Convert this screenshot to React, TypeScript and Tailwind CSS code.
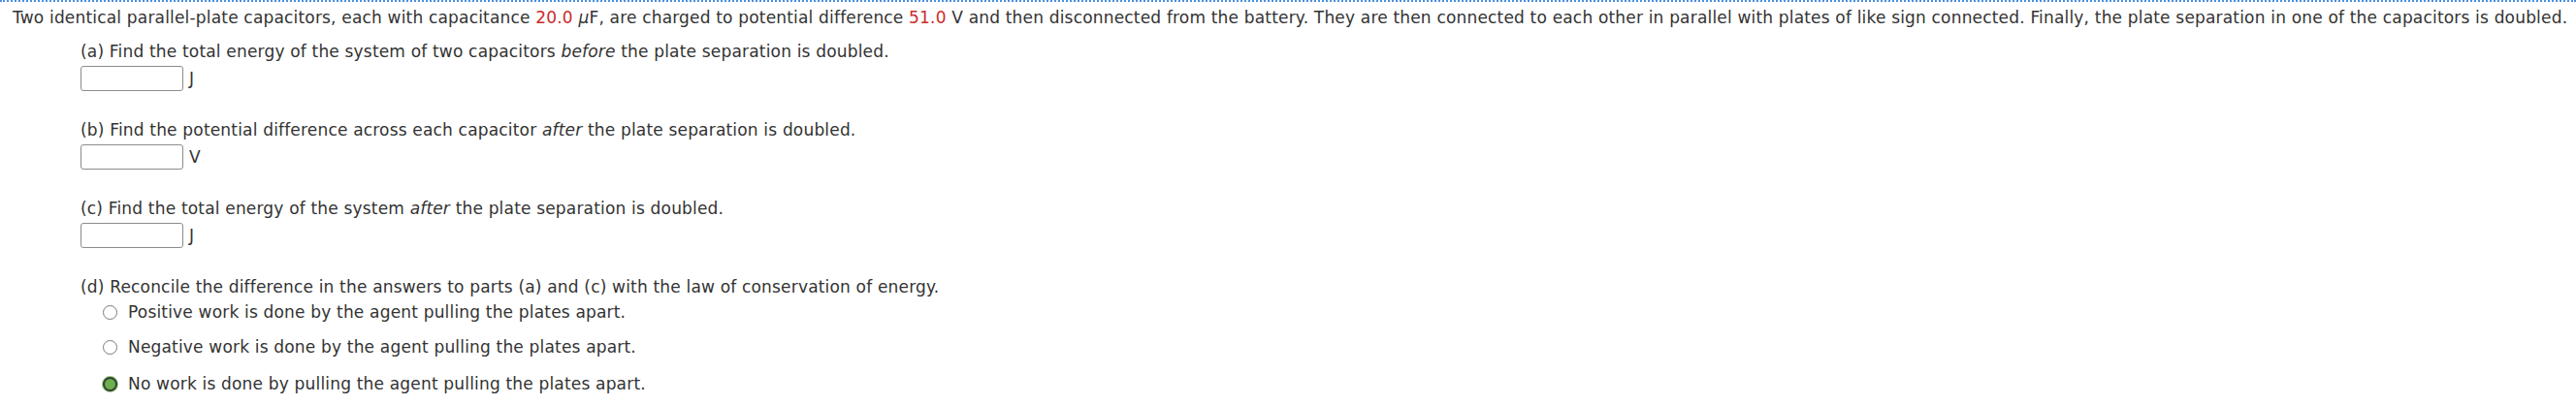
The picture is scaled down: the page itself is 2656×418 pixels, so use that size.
import React from 'react'

function AnswerBox({ unit }: { unit: string }) {
  return (
    <div className="flex items-center mt-[3px] h-[26px]">
      <input
        type="text"
        className="w-[106px] h-[26px] border border-[#8c8c8c] rounded-[3px] bg-white outline-none"
      />
      <span className="ml-[6px]">{unit}</span>
    </div>
  )
}

function Radio({ checked, label }: { checked?: boolean; label: string }) {
  return (
    <div className="flex items-center h-[24px] ml-[23px]">
      {checked ? (
        <span className="w-[15px] h-[15px] rounded-full border-2 border-[#3a3a3a] bg-[#6ab04c] shadow-[0_0_0_1px_#8fcf76]" />
      ) : (
        <span className="w-[15px] h-[15px] rounded-full border border-[#7a7a7a] bg-white" />
      )}
      <span className="ml-[11px]">{label}</span>
    </div>
  )
}

export default function App() {
  return (
    <div className="min-h-screen bg-white text-[#333333] text-[17px] tracking-[0.18px] leading-[24px] font-['DejaVu_Sans','Verdana',sans-serif]">
      <div className="border-t-2 border-dotted border-[#4a8fe0] pt-[4px] pl-[13px] whitespace-nowrap">
        {/* Problem statement */}
        <div>
          Two identical parallel-plate capacitors, each with capacitance{' '}
          <span className="text-[#cc2b2b]">20.0</span> <i>μ</i>F, are charged to potential difference{' '}
          <span className="text-[#cc2b2b]">51.0</span> V and then disconnected from the battery. They are then
          connected to each other in parallel with plates of like sign connected. Finally, the plate separation in
          one of the capacitors is doubled.
        </div>

        <div className="pl-[70px]">
          {/* (a) */}
          <div className="mt-[11px]">
            (a) Find the total energy of the system of two capacitors <i>before</i> the plate separation is doubled.
          </div>
          <AnswerBox unit="J" />

          {/* (b) */}
          <div className="mt-[28px]">
            (b) Find the potential difference across each capacitor <i>after</i> the plate separation is doubled.
          </div>
          <AnswerBox unit="V" />

          {/* (c) */}
          <div className="mt-[28px]">
            (c) Find the total energy of the system <i>after</i> the plate separation is doubled.
          </div>
          <AnswerBox unit="J" />

          {/* (d) */}
          <div className="mt-[28px]">
            (d) Reconcile the difference in the answers to parts (a) and (c) with the law of conservation of energy.
          </div>
          <div className="mt-[2px]">
            <Radio label="Positive work is done by the agent pulling the plates apart." />
          </div>
          <div className="mt-[12px]">
            <Radio label="Negative work is done by the agent pulling the plates apart." />
          </div>
          <div className="mt-[14px]">
            <Radio checked label="No work is done by pulling the agent pulling the plates apart." />
          </div>
        </div>
      </div>
    </div>
  )
}
